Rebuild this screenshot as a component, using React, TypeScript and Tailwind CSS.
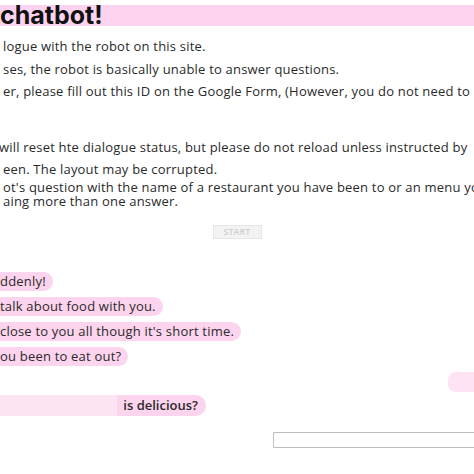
export default function App() {
  const bubble = 'h-[19px] w-fit rounded-r-full bg-[#fcd4ee] pr-[7px] text-[13px] leading-[19px] tracking-[0.2px] text-[#2a2a2a]';

  return (
    <div className="w-[474px] h-[474px] overflow-hidden bg-white font-['Open_Sans',sans-serif] text-[#2a2a2a]">
      <h1 className="mt-[5px] h-[21px] bg-[#fdd3ef] font-['Inter',sans-serif] text-[25px] font-bold leading-[21px] text-[#111]">
        chatbot!
      </h1>

      <div className="pl-[3px] text-[13px] tracking-[0.2px]">
        <p className="mt-[9px] leading-[22px]">logue with the robot on this site.</p>
        <p className="mt-[1px] leading-[22px]">ses, the robot is basically unable to answer questions.</p>
        <p className="leading-[22px] whitespace-nowrap">
          er, please fill out this ID on the Google Form, (However, you do not need to
        </p>
        <p className="mt-[34px] -ml-[4px] leading-[22px] whitespace-nowrap">
          will reset hte dialogue status, but please do not reload unless instructed by
        </p>
        <p className="leading-[22px]">een. The layout may be corrupted.</p>
        <p className="leading-[14px] whitespace-nowrap">
          ot's question with the name of a restaurant you have been to or an menu you
          <br />
          aing more than one answer.
        </p>
      </div>

      <div className="mt-[17px] flex justify-center">
        <button className="h-[14px] w-[49px] border border-[#e6e6e6] bg-[#f3f3f3] text-[9px] leading-[12px] font-semibold text-[#cfcfcf]">
          START
        </button>
      </div>

      <div className="mt-[33px] flex flex-col gap-[6px]">
        <div className={bubble}>ddenly!</div>
        <div className={bubble}>talk about food with you.</div>
        <div className={bubble}>close to you all though it's short time.</div>
        <div className={bubble}>ou been to eat out?</div>
      </div>

      <div className="mt-[6px] flex justify-end">
        <div className="h-[20px] w-[26px] rounded-l-lg bg-[#fde3f3]" />
      </div>

      <div className="mt-[3px] flex h-[21px] w-[206px] items-center rounded-r-full bg-[#fcd4ee] pr-[8px] text-[13px]">
        <div className="h-[21px] w-[117px] bg-[#fde4f3]" />
        <span className="ml-auto font-semibold">is delicious?</span>
      </div>

      <div className="mt-[16px] flex justify-end">
        <input className="h-[16px] w-[201px] rounded-l-[2px] border border-[#bdbdbd] border-r-0 bg-white" />
      </div>
    </div>
  );
}
